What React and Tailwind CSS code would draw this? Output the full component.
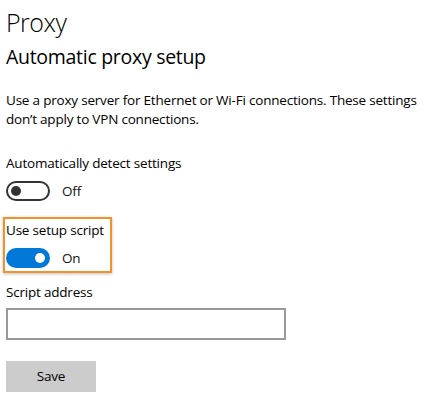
import React, { useState } from 'react';

function Toggle({ on, onChange }) {
  return (
    <div className="flex items-center h-5">
      <button
        onClick={onChange}
        className={`relative w-[44px] h-[20px] rounded-full box-border ${on ? 'bg-[#0078d7]' : 'border-2 border-[#333333] bg-white'}`}
      >
        <span
          className={`absolute top-1/2 -translate-y-1/2 w-[10px] h-[10px] rounded-full ${on ? 'right-[5px] bg-white' : 'left-[3px] bg-[#333333]'}`}
        />
      </button>
      <span className="ml-3 text-[13.5px] tracking-[-0.015em] text-[#111]">{on ? 'On' : 'Off'}</span>
    </div>
  );
}

export default function App() {
  const [autoDetect, setAutoDetect] = useState(false);
  const [useScript, setUseScript] = useState(true);
  const [address, setAddress] = useState('');

  return (
    <div className="w-[442px] h-[399px] bg-white overflow-hidden text-black font-['Segoe_UI','Open_Sans',sans-serif]">
      <div className="pl-[6px]">
        <h1 className="text-[25px] tracking-[-0.02em] font-light leading-[34px] pt-[5px]">Proxy</h1>
        <h2 className="text-[19.5px] tracking-[-0.015em] leading-[28px] mt-[4px]">Automatic proxy setup</h2>
        <p className="text-[13.5px] tracking-[-0.015em] leading-[19px] mt-[20px] pr-2">
          Use a proxy server for Ethernet or Wi-Fi connections. These settings don’t apply to VPN connections.
        </p>

        <div className="mt-[24px] text-[13.5px] tracking-[-0.015em] leading-[20px]">Automatically detect settings</div>
        <div className="mt-[8px]">
          <Toggle on={autoDetect} onChange={() => setAutoDetect(!autoDetect)} />
        </div>
      </div>

      <div className="ml-[3px] mt-[16px] w-[109px] border-2 border-[#f0932b] shadow-[0_1px_3px_rgba(0,0,0,0.25)] pl-[1px] pt-[1px] pb-[3px]">
        <div className="text-[13.5px] tracking-[-0.015em] leading-[20px] whitespace-nowrap">Use setup script</div>
        <div className="mt-[8px]">
          <Toggle on={useScript} onChange={() => setUseScript(!useScript)} />
        </div>
      </div>

      <div className="pl-[6px]">
        <div className="mt-[9px] text-[13.5px] tracking-[-0.015em] leading-[20px]">Script address</div>
        <input
          value={address}
          onChange={e => setAddress(e.target.value)}
          className="mt-[6px] w-[280px] h-[32px] border-2 border-[#999999] px-2 text-[14px] outline-none"
        />
        <button className="block mt-[21px] w-[90px] h-[31px] bg-[#cccccc] text-[13.5px] tracking-[-0.015em]">Save</button>
      </div>
    </div>
  );
}
